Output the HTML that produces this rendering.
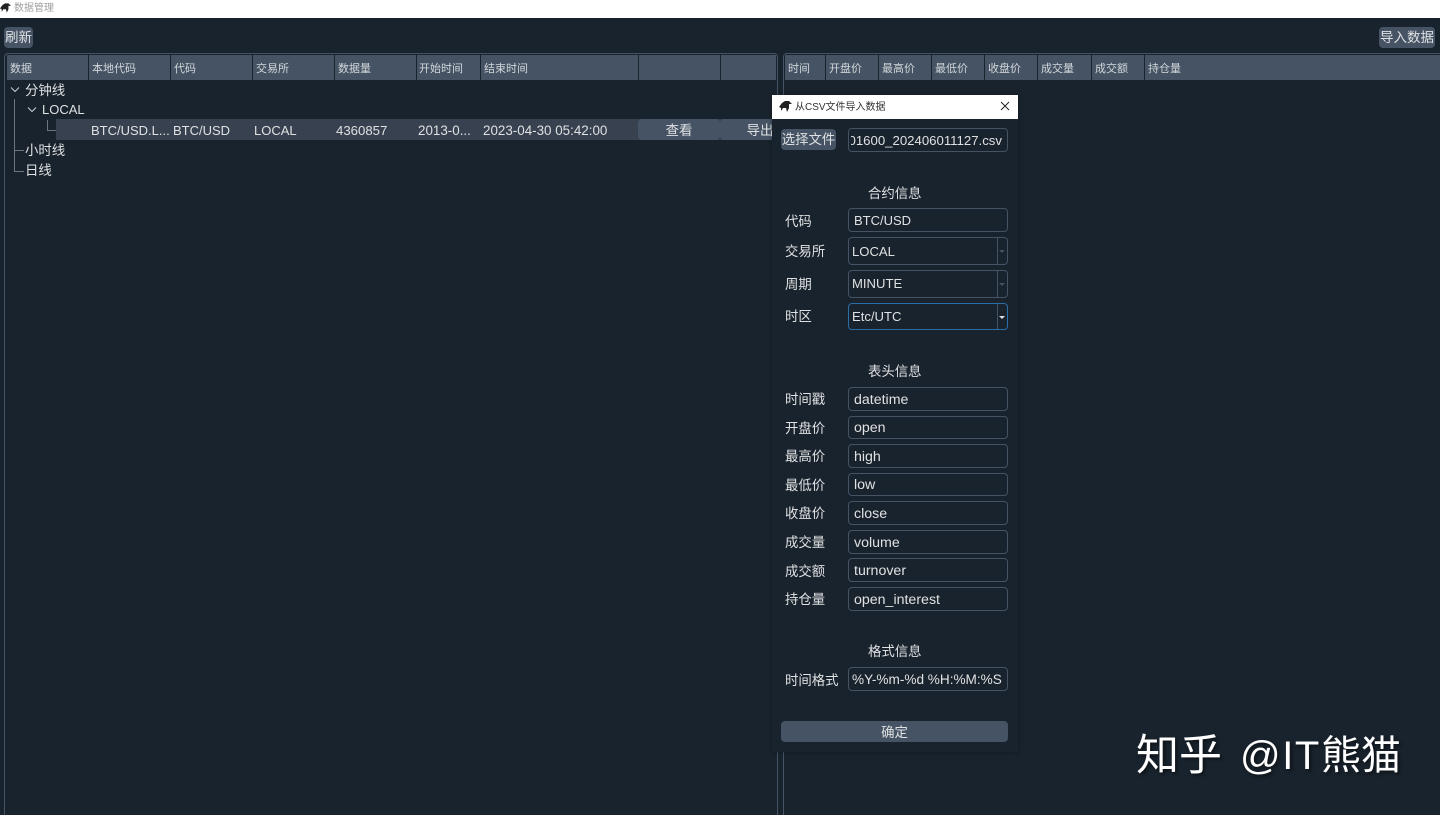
<!DOCTYPE html>
<html lang="zh"><head><meta charset="utf-8"><title>数据管理</title>
<style>
html,body{margin:0;padding:0;width:1440px;height:815px;overflow:hidden;background:#19232d}
body{position:relative;font-family:"Liberation Sans","Noto Sans CJK SC",sans-serif;color:#dfe1e2;font-size:14px}
.a{position:absolute;white-space:nowrap}
.t{position:absolute;white-space:nowrap;line-height:20px;height:20px;font-size:13.4px}
.h{position:absolute;top:55px;height:25px;background:#455364;color:#d3d7da;font-size:11px;line-height:28px;padding-left:3px;box-sizing:border-box;border-left:1px solid #19232d}
.btn{position:absolute;background:#455364;border-radius:4px;text-align:center;color:#dfe1e2;font-size:13.5px}
.in{position:absolute;left:848px;width:160px;box-sizing:border-box;border:1px solid #455364;border-radius:4px;background:#19232d;font-size:14.2px;color:#dfe1e2;padding-left:5px;overflow:hidden;white-space:nowrap}
.l{position:absolute;left:785px;font-size:13.4px;line-height:20px;white-space:nowrap;color:#dfe1e2}
.sec{position:absolute;left:868px;font-size:13.4px;line-height:20px;color:#dfe1e2}
.cb{position:absolute;left:848px;width:160px;box-sizing:border-box;border:1px solid #455364;border-radius:4px;background:#19232d;padding-left:3px;font-size:13.1px}
.cb i{position:absolute;right:9px;top:0;bottom:0;width:1px;background:#455364}
.cb b{position:absolute;right:2px;top:50%;margin-top:-1px;border:3px solid transparent;border-top:3px solid #455364;border-bottom:0}
.ln{position:absolute;background:#6b7682}
</style></head>
<body>
<!-- title bar -->
<div class="a" style="left:0;top:0;width:1440px;height:18px;background:#fff"></div>
<svg class="a" style="left:0;top:2px" width="11" height="12" viewBox="0 0 13 13"><path d="M0 7 L3 3 L6 1 L10 1 L13 4 L10 4 L10 8 L8 12 L7 8 L4 8 L2 11 L2 8 Z" fill="#222"/></svg>
<div class="t" style="left:14px;top:-1px;font-size:10px;line-height:20px;color:#a0a0a0">数据管理</div>

<!-- top buttons -->
<div class="btn" style="left:4px;top:27px;width:29px;height:21px;line-height:22px;font-size:13.5px">刷新</div>
<div class="btn" style="left:1379px;top:27px;width:56px;height:21px;line-height:22px;font-size:13.5px">导入数据</div>

<!-- left frame -->
<div class="a" style="left:4px;top:53px;width:774px;height:780px;box-sizing:border-box;border:1px solid #455364;border-radius:4px"></div>
<div class="h" style="left:6px;width:82px">数据</div>
<div class="h" style="left:88px;width:82px">本地代码</div>
<div class="h" style="left:170px;width:82px">代码</div>
<div class="h" style="left:252px;width:82px">交易所</div>
<div class="h" style="left:334px;width:82px">数据量</div>
<div class="h" style="left:416px;width:64px;padding-left:2px">开始时间</div>
<div class="h" style="left:480px;width:158px">结束时间</div>
<div class="h" style="left:638px;width:82px"></div>
<div class="h" style="left:720px;width:56px"></div>

<!-- tree -->
<svg class="a" style="left:9px;top:85px" width="50" height="40" viewBox="0 0 50 40"><path d="M2 2.5 L6 6.5 L10 2.5" fill="none" stroke="#c9cdd0" stroke-width="1"/><path d="M19 22.5 L23 26.5 L27 22.5" fill="none" stroke="#c9cdd0" stroke-width="1"/></svg>
<div class="t" style="left:25px;top:81px;font-size:13.4px">分钟线</div>
<div class="t" style="left:42px;top:100px;font-size:13px">LOCAL</div>
<div class="a" style="left:56px;top:119px;width:721px;height:21px;background:#37414f"></div>
<div class="ln" style="left:14px;top:99px;width:1px;height:72px"></div>
<div class="ln" style="left:14px;top:150px;width:10px;height:1px"></div>
<div class="ln" style="left:14px;top:171px;width:10px;height:1px"></div>
<div class="ln" style="left:47px;top:120px;width:1px;height:10px"></div>
<div class="ln" style="left:47px;top:130px;width:9px;height:1px"></div>
<div class="t" style="left:91px;top:121px;font-size:13px">BTC/USD.L...</div>
<div class="t" style="left:173px;top:121px;font-size:13px">BTC/USD</div>
<div class="t" style="left:254px;top:121px;font-size:13px">LOCAL</div>
<div class="t" style="left:336px;top:121px;font-size:13.2px">4360857</div>
<div class="t" style="left:418px;top:121px;font-size:13.4px">2013-0...</div>
<div class="t" style="left:483px;top:121px;font-size:13.4px">2023-04-30 05:42:00</div>
<div class="btn" style="left:638px;top:119px;width:82px;height:21px;line-height:23px;font-size:13.4px">查看</div>
<div class="btn" style="left:720px;top:119px;width:80px;height:21px;line-height:23px;font-size:13.4px">导出</div>
<div class="t" style="left:25px;top:141px;font-size:13.4px">小时线</div>
<div class="t" style="left:25px;top:161px;font-size:13.4px">日线</div>

<!-- right frame -->
<div class="a" style="left:783px;top:53px;width:670px;height:780px;box-sizing:border-box;border:1px solid #455364;border-radius:4px"></div>
<div class="h" style="left:784px;width:41px">时间</div>
<div class="h" style="left:825px;width:53px">开盘价</div>
<div class="h" style="left:878px;width:53px">最高价</div>
<div class="h" style="left:931px;width:53px">最低价</div>
<div class="h" style="left:984px;width:53px">收盘价</div>
<div class="h" style="left:1037px;width:54px">成交量</div>
<div class="h" style="left:1091px;width:53px">成交额</div>
<div class="h" style="left:1144px;width:296px">持仓量</div>

<!-- dialog -->
<div class="a" style="left:772px;top:95px;width:246px;height:657px;background:#19232d;box-shadow:0 0 4px rgba(0,0,0,.35)"></div>
<div class="a" style="left:772px;top:95px;width:246px;height:24px;background:#fff"></div>
<svg class="a" style="left:779px;top:100px" width="13" height="13" viewBox="0 0 13 13"><path d="M0 7 L3 3 L6 1 L10 1 L13 4 L10 4 L10 8 L8 12 L7 8 L4 8 L2 11 L2 8 Z" fill="#222"/></svg>
<div class="t" style="left:795px;top:98px;font-size:10px;color:#333">从CSV文件导入数据</div>
<svg class="a" style="left:1000px;top:101px" width="10" height="10" viewBox="0 0 10 10"><path d="M1 1 L9 9 M9 1 L1 9" stroke="#222" stroke-width="1"/></svg>

<div class="btn" style="left:781px;top:129px;width:55px;height:21px;line-height:21px;font-size:13.4px">选择文件</div>
<div class="in" style="top:128px;height:24px;line-height:24px;padding-left:0;font-size:13.2px"><span style="position:absolute;right:5px;top:0;line-height:24px">01600_202406011127.csv</span><span style="position:absolute;left:0;top:0;width:2px;height:22px;background:#19232d"></span></div>

<div class="sec" style="top:184px">合约信息</div>
<div class="l" style="top:212px">代码</div>
<div class="in" style="top:208px;height:24px;line-height:23px;font-size:13px">BTC/USD</div>
<div class="l" style="top:242px">交易所</div>
<div class="cb" style="top:237px;height:28px;line-height:27px">LOCAL<i></i><b></b></div>
<div class="l" style="top:275px">周期</div>
<div class="cb" style="top:270px;height:28px;line-height:26px">MINUTE<i></i><b></b></div>
<div class="l" style="top:307px">时区</div>
<div class="cb" style="top:303px;height:27px;line-height:25px;border-color:#2a6ea8">Etc/UTC<i></i><b style="border-top-color:#dfe1e2"></b></div>

<div class="sec" style="top:362px">表头信息</div>
<div class="l" style="top:390px">时间戳</div><div class="in" style="top:387px;height:24px;line-height:24px">datetime</div>
<div class="l" style="top:419px">开盘价</div><div class="in" style="top:416px;height:23px;line-height:22px">open</div>
<div class="l" style="top:447px">最高价</div><div class="in" style="top:444px;height:24px;line-height:24px">high</div>
<div class="l" style="top:476px">最低价</div><div class="in" style="top:473px;height:23px;line-height:22px">low</div>
<div class="l" style="top:504px">收盘价</div><div class="in" style="top:501px;height:24px;line-height:24px">close</div>
<div class="l" style="top:533px">成交量</div><div class="in" style="top:530px;height:24px;line-height:24px">volume</div>
<div class="l" style="top:562px">成交额</div><div class="in" style="top:558px;height:24px;line-height:24px">turnover</div>
<div class="l" style="top:590px">持仓量</div><div class="in" style="top:587px;height:24px;line-height:24px">open_interest</div>

<div class="sec" style="top:642px">格式信息</div>
<div class="l" style="top:671px">时间格式</div>
<div class="in" style="top:667px;height:24px;line-height:23px;padding-left:3px;font-size:13.6px">%Y-%m-%d %H:%M:%S</div>
<div class="btn" style="left:781px;top:721px;width:227px;height:21px;line-height:23px;font-size:13.4px">确定</div>

<!-- watermark -->
<div class="a" style="left:1136px;top:730px;font-size:40px;line-height:52px;color:#fff;text-shadow:2px 2px 3px rgba(0,0,0,.5)"><span style="font-size:43px">知乎</span><span style="position:absolute;left:104px;top:0;letter-spacing:1.6px">@IT<span style="letter-spacing:0">熊猫</span></span></div>
</body></html>
